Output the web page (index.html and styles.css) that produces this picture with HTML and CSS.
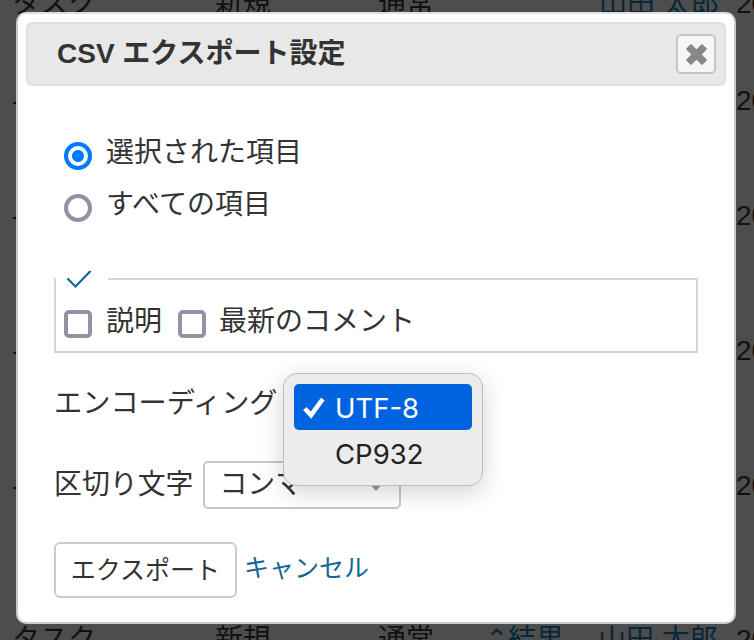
FILE: index.html
```html
<!DOCTYPE html>
<html lang="ja">
<head>
<meta charset="utf-8">
<title>CSV エクスポート設定</title>
<link rel="stylesheet" href="styles.css">
</head>
<body>
<div class="page">
  <div class="row row-first"><span class="c-subject">タスク</span><span class="c-status">新規</span><span class="c-prio">通常</span><span class="c-assign"><a>山田 太郎</a></span><span class="c-date">20</span></div>
  <div class="row row-mid"><span class="c-subject">-</span><span class="c-date">20</span></div>
  <div class="row row-mid2"><span class="c-subject">-</span><span class="c-date">20</span></div>
  <div class="row row-mid2"><span class="c-subject">-</span><span class="c-date">20</span></div>
  <div class="row row-mid2"><span class="c-subject">-</span><span class="c-date">20</span></div>
  <div class="row row-last"><span class="c-subject">タスク</span><span class="c-status">新規</span><span class="c-prio">通常</span><span class="c-link"><a class="caret">⌃</a><a>結果</a></span><span class="c-assign2"><a>山田 太郎</a></span><span class="c-date">20</span></div>
</div>
<div class="overlay">
  <div class="dialog">
    <div class="titlebar">
      <span class="title">CSV エクスポート設定</span>
      <button class="close" aria-label="閉じる">
        <svg viewBox="1.6 1.6 16.8 16.8" width="21" height="21"><path d="M2.6 5.6 5.6 2.6 10 7 14.4 2.6 17.4 5.6 13 10 17.4 14.4 14.4 17.4 10 13 5.6 17.4 2.6 14.4 7 10Z" fill="#888" stroke="#888" stroke-width="1.6" stroke-linejoin="round"/></svg>
      </button>
    </div>
    <div class="body">
      <label class="opt first"><input type="radio" name="scope" checked><span>選択された項目</span></label>
      <label class="opt"><input type="radio" name="scope"><span>すべての項目</span></label>
      <fieldset class="group">
        <legend class="legend"><svg viewBox="0 0 26 20" width="26" height="20"><path d="M1.5 9.5 9.5 17.5 24.5 2" fill="none" stroke="#169" stroke-width="2.2"/></svg></legend>
        <div class="checks">
          <label class="check"><input type="checkbox"><span>説明</span></label>
          <label class="check"><input type="checkbox"><span>最新のコメント</span></label>
        </div>
      </fieldset>
      <div class="field encoding">
        <span>エンコーディング</span>
        <div class="popup">
          <div class="item active"><svg class="tick" viewBox="0 0 22 22" width="22" height="22"><path d="M1.8 11.5 8 18.2 19.8 2" fill="none" stroke="#fff" stroke-width="4.6"/></svg>UTF-8</div>
          <div class="item">CP932</div>
        </div>
      </div>
      <div class="field delimiter">
        <span>区切り文字</span>
        <div class="select">コンマ<i class="arrow"></i></div>
      </div>
      <div class="actions">
        <button class="btn">エクスポート</button>
        <a class="cancel">キャンセル</a>
      </div>
    </div>
  </div>
</div>
</body>
</html>
```

FILE: styles.css
```css
html, body { margin: 0; padding: 0; }
body {
  width: 754px;
  height: 640px;
  overflow: hidden;
  position: relative;
  background: #4c4d4c;
  color: #111;
  font: 28px/1.2 "Liberation Sans", "Noto Sans CJK JP", sans-serif;
}
a { color: #07263a; }
.page { display: flex; flex-direction: column; height: 640px; padding-left: 12px; box-sizing: border-box; }
.row { display: flex; align-items: center; white-space: nowrap; position: relative; flex: none; }
.row span { display: block; flex: none; }
.row-first { height: 20px; margin-top: -6px; margin-bottom: 77px; }
.row-mid { height: 20px; margin-bottom: 95px; }
.row-mid2 { height: 20px; margin-bottom: 115px; }
.row-last { height: 34px; margin-top: 12px; }
.c-subject { width: 203px; }
.c-status { width: 163px; }
.c-prio { width: 107px; }
.c-link { width: 113px; display: flex; }
.caret { width: 27px; }
.c-assign { width: 120px; margin-left: 114px; }
.c-assign2 { width: 0; }
.c-date { position: absolute; left: 724px; }

.overlay { position: absolute; left: 16px; top: 12px; width: 720px; height: 612px; }
.dialog {
  box-sizing: border-box;
  height: 100%;
  background: #fff;
  border: 2px solid #c9c9c9;
  border-top-color: #dedede;
  border-radius: 10px;
  padding: 8px;
  color: #333;
}
.titlebar {
  box-sizing: border-box;
  height: 64px;
  background: #e8e8e8;
  border: 2px solid #dfdfdf;
  border-radius: 6px;
  display: flex;
  align-items: center;
  justify-content: space-between;
  padding: 0 8px 0 29px;
}
.title { font-weight: 700; color: #333; font-size: 28px; }
.close {
  box-sizing: border-box;
  width: 40px;
  height: 40px;
  padding: 0;
  background: #f6f6f6;
  border: 2px solid #c6c6c6;
  border-radius: 5px;
  display: flex;
  align-items: center;
  justify-content: center;
}
.body { padding: 0 28px; }
.opt { display: flex; align-items: center; height: 52px; gap: 14px; padding-left: 10px; }
.opt.first { margin-top: 41px; }
input[type=radio], input[type=checkbox] {
  appearance: none;
  box-sizing: border-box;
  width: 28px;
  height: 28px;
  margin: 6px 0 0;
  background: #fff;
  border: 4px solid #9392a4;
  flex: none;
}
input[type=radio] { border-radius: 50%; }
input[type=radio]:checked {
  border-color: #007aff;
  background: radial-gradient(circle, #007aff 0 5.6px, #fff 6.4px);
  background-clip: padding-box;
}
input[type=checkbox] { border-radius: 5px; margin-top: 4px; }
.group {
  box-sizing: border-box;
  height: 84px;
  margin: 38px 0 0;
  padding: 0 8px;
  border: 2px solid #d3d6e2;
  min-width: 0;
}
.legend { padding: 0; margin-left: -8px; width: 52px; height: 20px; line-height: 0; box-sizing: border-box; }
.legend svg { display: block; margin-left: 10px; }
.checks { display: flex; gap: 16px; margin-top: 16px; }
.check { display: flex; align-items: center; gap: 14px; }
.check + .check { gap: 13px; }
.field { display: flex; align-items: center; position: relative; }
.encoding { height: 48px; margin-top: 27px; font-size: 28.2px; }
.popup {
  position: absolute;
  left: 229px;
  top: -7px;
  box-sizing: border-box;
  width: 200px;
  height: 113px;
  background: #ececec;
  border: 1px solid #bdbdbd;
  border-radius: 14px;
  box-shadow: 0 6px 24px rgba(0,0,0,.18);
  padding: 10px;
  z-index: 2;
  color: #222;
}
.item {
  box-sizing: border-box;
  height: 46px;
  border-radius: 5px;
  display: flex;
  align-items: center;
  padding: 3px 0 0 41px;
  font-size: 27.5px;
  font-family: Inter, "Liberation Sans", sans-serif;
  position: relative;
}
.item.active { background: #0064e1; color: #fff; }
.tick { position: absolute; left: 9px; top: 13px; }
.delimiter { margin-top: 33px; height: 48px; gap: 10px; font-size: 27.9px; }
.select {
  box-sizing: border-box;
  width: 198px;
  height: 48px;
  border: 2px solid #c8c8c8;
  border-radius: 5px;
  background: #fff;
  padding-left: 14px;
  line-height: 44px;
  position: relative;
}
.arrow {
  position: absolute;
  right: 16px;
  top: 20px;
  width: 0;
  height: 0;
  border: 7px solid transparent;
  border-top: 8px solid #999;
}
.actions { display: flex; align-items: center; gap: 7px; margin-top: 33px; }
.btn {
  box-sizing: border-box;
  width: 183px;
  height: 56px;
  padding: 0;
  background: #fff;
  border: 2px solid #ccc;
  border-radius: 6px;
  color: #333;
  font: inherit;
  font-size: 25px;
}
.cancel { color: #169; font-size: 25px; padding-bottom: 4px; }
```
